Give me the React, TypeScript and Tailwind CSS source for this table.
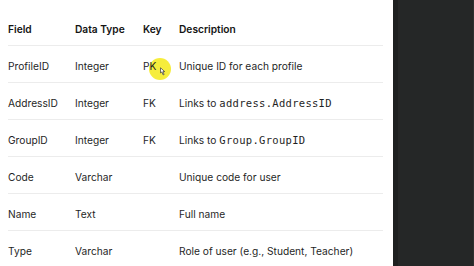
import React from 'react';

interface Row {
  field: string;
  type: string;
  key: string;
  desc: React.ReactNode;
}

const Code = ({ children }: { children: React.ReactNode }) => (
  <span className="font-['DejaVu_Sans_Mono','Liberation_Mono',monospace] text-[10.5px] tracking-[0.3px]">{children}</span>
);

const rows: Row[] = [
  { field: 'ProfileID', type: 'Integer', key: 'PK', desc: 'Unique ID for each profile' },
  { field: 'AddressID', type: 'Integer', key: 'FK', desc: <>Links to <Code>address.AddressID</Code></> },
  { field: 'GroupID', type: 'Integer', key: 'FK', desc: <>Links to <Code>Group.GroupID</Code></> },
  { field: 'Code', type: 'Varchar', key: '', desc: 'Unique code for user' },
  { field: 'Name', type: 'Text', key: '', desc: 'Full name' },
  { field: 'Type', type: 'Varchar', key: '', desc: 'Role of user (e.g., Student, Teacher)' },
];

const cols = 'grid grid-cols-[67px_68px_36px_1fr]';

export default function App() {
  return (
    <div className="flex h-[266px] w-[474px] overflow-hidden bg-white font-['Inter','Noto_Sans',sans-serif] text-[10.2px] text-[#1f1f1f]">
      <div className="w-[393px] pl-2 pr-[10px] pt-[9px]">
        {/* Header */}
        <div className={`${cols} border-b border-[#ececec] pt-3 pb-2 leading-4 font-semibold text-[#141414]`}>
          <div>Field</div>
          <div>Data Type</div>
          <div>Key</div>
          <div>Description</div>
        </div>

        {rows.map((r, i) => (
          <div
            key={r.field}
            className={`${cols} pt-3 pb-2 leading-4 ${i < rows.length - 1 ? 'border-b border-[#ececec]' : ''}`}
          >
            <div>{r.field}</div>
            <div>{r.type}</div>
            <div className="relative">
              {i === 0 && (
                <span className="absolute left-[6px] top-0 h-[22px] w-[22px] rounded-full bg-[#f4ea1a]/85" />
              )}
              <span className="relative">{r.key}</span>
              {i === 0 && (
                <svg className="absolute left-[16px] top-[9px]" width="7" height="9" viewBox="0 0 7 9">
                  <path d="M1.5 0.8v5.2l1.4-1.1 1.2 3 1-0.4-1.2-2.9h1.8z" fill="#fff" stroke="#333" strokeWidth="0.7" />
                </svg>
              )}
            </div>
            <div>{r.desc}</div>
          </div>
        ))}
      </div>

      {/* Dark side panel */}
      <div className="flex flex-1">
        <div className="w-[5px] bg-[#1e2020]" />
        <div className="flex-1 bg-[#252727]" />
        <div className="w-px bg-[#2e3030]" />
      </div>
    </div>
  );
}
